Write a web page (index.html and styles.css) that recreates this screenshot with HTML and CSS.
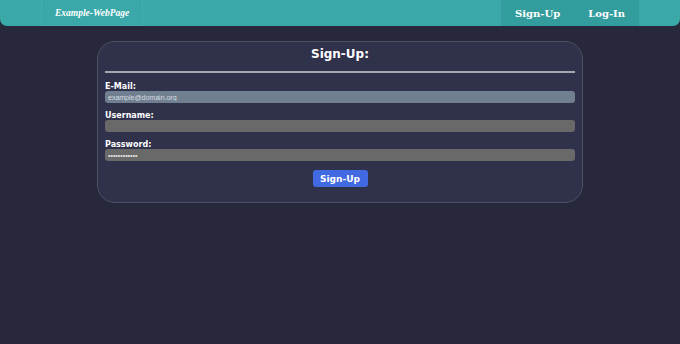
FILE: index.html
```html
<!DOCTYPE html>
<html lang="en">
<head>
    <meta charset="UTF-8">
    <meta name="viewport" content="width=device-width, initial-scale=1.0">
    <title>Example-WebPage - Sign-Up</title>
    <link rel="stylesheet" href="styles.css">
</head>
<body>
    <header class="topbar">
        <a class="brand" href="#">Example-WebPage</a>
        <nav class="nav">
            <a class="nav-link" href="#">Sign-Up</a>
            <a class="nav-link" href="#">Log-In</a>
        </nav>
    </header>

    <main>
        <form class="card" onsubmit="return false;">
            <h1 class="card-title">Sign-Up:</h1>
            <hr class="divider">

            <div class="field">
                <label for="email">E-Mail:</label>
                <input class="input input-email" id="email" type="email" placeholder="example@domain.org">
            </div>

            <div class="field">
                <label for="username">Username:</label>
                <input class="input" id="username" type="text">
            </div>

            <div class="field">
                <label for="password">Password:</label>
                <input class="input" id="password" type="password" value="secretpasswd">
            </div>

            <div class="actions">
                <button class="submit-btn" type="submit">Sign-Up</button>
            </div>
        </form>
    </main>
</body>
</html>
```

FILE: styles.css
```css
body {
    margin: 0;
    background: #27283b;
    font-family: "DejaVu Sans", Verdana, sans-serif;
    color: white;
}

.topbar {
    display: flex;
    justify-content: space-between;
    align-items: stretch;
    height: 26px;
    background: #3aa8a8;
    border-radius: 0 0 7px 7px;
    padding: 0 41px;
}

.brand {
    display: flex;
    align-items: center;
    padding: 0 13px;
    border: 1px dotted rgba(255, 255, 255, 0.12);
    border-top: none;
    color: white;
    text-decoration: none;
    font-family: "Liberation Serif", "Times New Roman", serif;
    font-style: italic;
    font-weight: bold;
    font-size: 9.5px;
}

.nav {
    display: flex;
    background: #339d9d;
}

.nav-link {
    display: flex;
    align-items: center;
    padding: 0 14px;
    color: white;
    text-decoration: none;
    font-family: "DejaVu Serif", Georgia, serif;
    font-weight: bold;
    font-size: 10px;
}

.card {
    width: 470px;
    margin: 15px auto 0;
    padding: 5px 7px 15px;
    background: #30314a;
    border: 1px solid #4f5064;
    border-radius: 18px;
}

.card-title {
    margin: 0;
    text-align: center;
    font-size: 12px;
    line-height: 15px;
}

.divider {
    margin: 9px 0 9px;
    border: none;
    border-top: 2px solid #a7a7b4;
}

.field {
    display: flex;
    flex-direction: column;
    margin-bottom: 8px;
}

.field label {
    font-size: 8px;
    font-weight: bold;
    line-height: 9px;
}

.input {
    height: 12px;
    padding: 0 3px;
    border: none;
    border-radius: 3px;
    background: #696969;
    color: #e6e6e6;
    font-family: "Liberation Sans", Arial, sans-serif;
    font-size: 7px;
}

.input-email {
    background: #708090;
}

.input::placeholder {
    color: #d8dde2;
}

.actions {
    display: flex;
    justify-content: center;
    padding-top: 1px;
}

.submit-btn {
    width: 55px;
    height: 17px;
    padding: 0;
    border: none;
    border-radius: 3px;
    background: #4169e1;
    color: white;
    font-family: "DejaVu Sans", Verdana, sans-serif;
    font-weight: bold;
    font-size: 9px;
}
```
